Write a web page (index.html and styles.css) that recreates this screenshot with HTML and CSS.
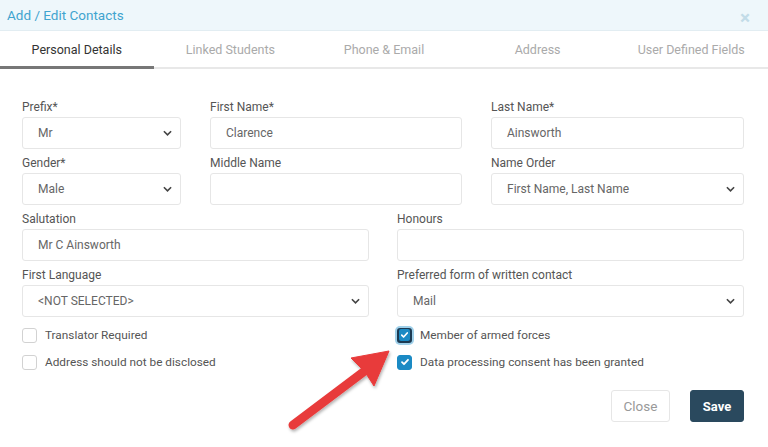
FILE: index.html
```html
<!DOCTYPE html>
<html lang="en">
  <head>
    <meta charset="UTF-8" />
    <meta name="viewport" content="width=device-width, initial-scale=1.0" />
    <title>Add / Edit Contacts</title>
    <link rel="stylesheet" href="styles.css">
  </head>
  <body>
    <div class="modal">
      <div class="modal-header">
        <span class="modal-title">Add / Edit Contacts</span>
        <span class="modal-close">&times;</span>
      </div>

      <div class="tabs">
        <div class="tab active">Personal Details</div>
        <div class="tab">Linked Students</div>
        <div class="tab">Phone &amp; Email</div>
        <div class="tab">Address</div>
        <div class="tab">User Defined Fields</div>
      </div>

      <div class="form">
        <div class="row row-three">
          <div class="field">
            <label>Prefix*</label>
            <div class="control select"><span>Mr</span><svg class="chevron" viewBox="0 0 10 6"><path d="M1 1l4 4 4-4" /></svg></div>
          </div>
          <div class="field">
            <label>First Name*</label>
            <div class="control"><span>Clarence</span></div>
          </div>
          <div class="field">
            <label>Last Name*</label>
            <div class="control"><span>Ainsworth</span></div>
          </div>
        </div>

        <div class="row row-three">
          <div class="field">
            <label>Gender*</label>
            <div class="control select"><span>Male</span><svg class="chevron" viewBox="0 0 10 6"><path d="M1 1l4 4 4-4" /></svg></div>
          </div>
          <div class="field">
            <label>Middle Name</label>
            <div class="control"></div>
          </div>
          <div class="field">
            <label>Name Order</label>
            <div class="control select"><span>First Name, Last Name</span><svg class="chevron" viewBox="0 0 10 6"><path d="M1 1l4 4 4-4" /></svg></div>
          </div>
        </div>

        <div class="row row-two">
          <div class="field">
            <label>Salutation</label>
            <div class="control"><span>Mr C Ainsworth</span></div>
          </div>
          <div class="field">
            <label>Honours</label>
            <div class="control"></div>
          </div>
        </div>

        <div class="row row-two">
          <div class="field">
            <label>First Language</label>
            <div class="control select"><span>&lt;NOT SELECTED&gt;</span><svg class="chevron" viewBox="0 0 10 6"><path d="M1 1l4 4 4-4" /></svg></div>
          </div>
          <div class="field">
            <label>Preferred form of written contact</label>
            <div class="control select"><span>Mail</span><svg class="chevron" viewBox="0 0 10 6"><path d="M1 1l4 4 4-4" /></svg></div>
          </div>
        </div>

        <div class="row row-two checks">
          <div class="check-list">
            <div class="check"><span class="box"></span>Translator Required</div>
            <div class="check"><span class="box"></span>Address should not be disclosed</div>
          </div>
          <div class="check-list">
            <div class="check"><span class="box checked focused"><svg viewBox="0 0 12 12"><path d="M3 6.2l2 2 4-4.4" /></svg></span>Member of armed forces</div>
            <div class="check"><span class="box checked"><svg viewBox="0 0 12 12"><path d="M3 6.2l2 2 4-4.4" /></svg></span>Data processing consent has been granted</div>
          </div>
        </div>

        <div class="actions">
          <button class="btn btn-close">Close</button>
          <button class="btn btn-save">Save</button>
        </div>
      </div>

      <!-- annotation arrow drawn over the form -->
      <svg class="arrow" viewBox="0 0 768 447">
        <defs>
          <filter id="shadow" x="-20%" y="-20%" width="140%" height="140%">
            <feDropShadow dx="1" dy="2" stdDeviation="1.5" flood-color="#000" flood-opacity="0.3" />
          </filter>
        </defs>
        <g filter="url(#shadow)" fill="#e83b3b" stroke="#e83b3b">
          <line x1="293" y1="425" x2="366" y2="370" stroke-width="9" stroke-linecap="round" />
          <polygon points="389,351 374,386 365,372 351,358" stroke-width="1" stroke-linejoin="round" />
        </g>
      </svg>
    </div>
  </body>
</html>
```

FILE: styles.css
```css
* {
  box-sizing: border-box;
}
body {
  margin: 0;
  background-color: #fff;
  font-family: Roboto, "Liberation Sans", sans-serif;
  color: #555;
}
.modal {
  position: relative;
  width: 768px;
  height: 447px;
  overflow: hidden;
}
.modal-header {
  display: flex;
  align-items: center;
  justify-content: space-between;
  height: 31px;
  padding: 0 18px 0 7px;
  background-color: #eef7fb;
  border-bottom: 1px solid #e2edf2;
}
.modal-title {
  font-size: 13.5px;
  color: #3fa4cf;
}
.modal-close {
  font-size: 19px;
  font-weight: bold;
  color: #c2dce8;
  margin-top: 4px;
}
.tabs {
  display: grid;
  grid-template-columns: repeat(5, 1fr);
  height: 38px;
}
.tab {
  display: flex;
  align-items: center;
  justify-content: center;
  font-size: 12.5px;
  color: #aaa;
  border-bottom: 2px solid #e8e8e8;
  padding-top: 1px;
}
.tab.active {
  color: #333;
  border-bottom: 3px solid #777;
  padding-top: 2px;
}
.form {
  padding: 30px 24px 0 22px;
}
.row {
  display: grid;
  column-gap: 29px;
  margin-bottom: 6px;
}
.row-three {
  grid-template-columns: 159px 252px 253px;
}
.row-two {
  grid-template-columns: 347px 347px;
  column-gap: 28px;
}
.field label {
  display: block;
  font-size: 12px;
  line-height: 16px;
  color: #555;
  margin-bottom: 2px;
}
.control {
  display: flex;
  align-items: center;
  justify-content: space-between;
  height: 32px;
  padding: 0 8px 0 15px;
  border: 1px solid #e6e6e6;
  border-radius: 3px;
  font-size: 12px;
  color: #666;
}
.chevron {
  width: 9px;
  height: 6px;
  fill: none;
  stroke: #444;
  stroke-width: 1.8;
}
.checks {
  margin-top: 9px;
}
.check-list {
  display: flex;
  flex-direction: column;
  gap: 9px;
}
.check {
  display: flex;
  align-items: center;
  gap: 8px;
  height: 18px;
  font-size: 11.8px;
  color: #555;
}
.box {
  display: flex;
  align-items: center;
  justify-content: center;
  width: 15px;
  height: 15px;
  border: 1px solid #d2d2d2;
  border-radius: 3px;
  background-color: #fff;
}
.box svg {
  width: 12px;
  height: 12px;
  fill: none;
  stroke: #fff;
  stroke-width: 1.8;
  stroke-linecap: round;
  stroke-linejoin: round;
}
.box.checked {
  background-color: #1b8ac4;
  border-color: #1b8ac4;
}
.box.focused {
  background-color: #1d3a52;
  border: 2px solid #1d3a52;
  box-shadow: 0 0 0 2px #9fd0ea;
}
.box.focused svg {
  background-color: #1b8ac4;
  border-radius: 2px;
}
.actions {
  display: flex;
  justify-content: flex-end;
  gap: 20px;
  margin-top: 19px;
}
.btn {
  height: 32px;
  border-radius: 3px;
  font-family: Roboto, "Liberation Sans", sans-serif;
  font-size: 13px;
}
.btn-close {
  width: 59px;
  background-color: #fff;
  border: 1px solid #e6e6e6;
  color: #999;
  font-size: 13.5px;
}
.btn-save {
  width: 54px;
  background-color: #2a495e;
  border: 1px solid #2a495e;
  color: #fff;
  font-weight: bold;
}
.arrow {
  position: absolute;
  top: 0;
  left: 0;
  width: 768px;
  height: 447px;
  pointer-events: none;
}
```
